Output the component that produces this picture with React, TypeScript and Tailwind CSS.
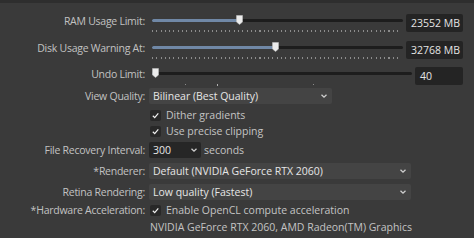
import React from "react";

const font = { fontFamily: '"Open Sans", "Noto Sans", sans-serif' };

function Chevron() {
  return (
    <svg width="8" height="6" viewBox="0 0 8 6" className="shrink-0">
      <path d="M1.5 1.8 L4 4.2 L6.5 1.8" fill="none" stroke="#cfcfcf" strokeWidth="1.3" />
    </svg>
  );
}

function Check() {
  return (
    <span className="flex h-[11px] w-[11px] items-center justify-center rounded-[2px] bg-[#282828]">
      <svg width="9" height="9" viewBox="0 0 9 9">
        <path d="M1.8 4.8 L3.7 6.6 L7.3 2.4" fill="none" stroke="#f0f0f0" strokeWidth="1.2" />
      </svg>
    </span>
  );
}

function Thumb() {
  return (
    <svg width="7" height="10" viewBox="0 0 7 10">
      <path d="M0.5 0.5 H6.5 V7 L3.5 9.5 L0.5 7 Z" fill="#ececec" stroke="#bdbdbd" strokeWidth="0.6" />
    </svg>
  );
}

function Label({ children }: { children: React.ReactNode }) {
  return (
    <div className="w-[146px] shrink-0 pr-[1px] text-right tracking-[-0.25px] text-[#c2c2c2]">{children}</div>
  );
}

function SliderRow({
  label,
  value,
  pos,
  width,
  boxWidth,
  dense,
  height,
}: {
  label: string;
  value: string;
  pos: number;
  width: number;
  boxWidth: number;
  dense: boolean;
  height: string;
}) {
  return (
    <div className={`flex ${height}`}>
      <div className="w-[146px] shrink-0 pt-[2px] pr-[1px] text-right tracking-[-0.25px] text-[#c2c2c2]">
        {label}
      </div>
      <div className="ml-[6px] shrink-0" style={{ width }}>
        <div className="relative mt-[8px] h-[3px] rounded-full bg-[#1d1d1d]">
          <div className="h-[3px] rounded-full bg-[#7088a6]" style={{ width: pos }} />
          <div className="absolute top-[-4px]" style={{ left: pos - 3 }}>
            <Thumb />
          </div>
        </div>
        {dense ? (
          <div className="mt-[8px] h-[2px] w-[249px] bg-[repeating-linear-gradient(90deg,#8c8c8c_0_1px,transparent_1px_4.3px)]" />
        ) : (
          <div className="relative mt-[9px] h-[2px]">
            <span className="absolute left-[33px] h-[1px] w-[1px] bg-[#8a8a8a]" />
            <span className="absolute left-[65px] h-[2px] w-[1px] bg-[#b0b0b0]" />
            <span className="absolute left-[161px] h-[1px] w-[1px] bg-[#8a8a8a]" />
          </div>
        )}
      </div>
      <div
        className="ml-auto mr-[11px] mt-[3px] flex h-[18px] items-center rounded-[2px] bg-[#242424] pl-[5px] text-[#e4e4e4]"
        style={{ width: boxWidth }}
      >
        {value}
      </div>
    </div>
  );
}

export default function App() {
  return (
    <div
      className="h-[238px] w-[474px] overflow-hidden bg-[#3a3a3a] text-[10.5px] leading-[16px]"
      style={font}
    >
      <div className="h-[3px] bg-[#2e2e2e]" />
      <div className="flex flex-col pt-[8px]">
        <SliderRow label="RAM Usage Limit:" value="23552 MB" pos={87} width={251} boxWidth={57} dense height="h-[27px]" />
        <SliderRow label="Disk Usage Warning At:" value="32768 MB" pos={123} width={251} boxWidth={57} dense height="h-[26px]" />
        <SliderRow label="Undo Limit:" value="40" pos={3} width={260} boxWidth={48} dense={false} height="h-[24px]" />

        <div className="flex h-[16px] items-center">
          <Label>View Quality:</Label>
          <div className="ml-[3px] flex h-[16px] w-[183px] items-center justify-between rounded-[2px] bg-[#444444] pl-[4px] pr-[4px] text-[#e6e6e6]">
            <span>Bilinear (Best Quality)</span>
            <Chevron />
          </div>
        </div>

        <div className="mt-[3px] flex h-[16px] items-center pl-[150px] text-[#c4c4c4]">
          <Check />
          <span className="ml-[5px]">Dither gradients</span>
        </div>
        <div className="flex h-[16px] items-center pl-[150px] text-[#c4c4c4]">
          <Check />
          <span className="ml-[5px]">Use precise clipping</span>
        </div>

        <div className="mt-[3px] flex h-[16px] items-center">
          <Label>File Recovery Interval:</Label>
          <div className="ml-[3px] flex h-[16px] w-[52px] items-center justify-between rounded-[2px] bg-[#262626] pl-[4px] pr-[3px] text-[#e6e6e6]">
            <span>300</span>
            <Chevron />
          </div>
          <span className="ml-[3px] text-[#c4c4c4]">seconds</span>
        </div>

        <div className="mt-[5px] flex h-[16px] items-center">
          <Label>*Renderer:</Label>
          <div className="ml-[3px] flex h-[16px] w-[262px] items-center justify-between rounded-[2px] bg-[#444444] pl-[4px] pr-[4px] text-[#e6e6e6]">
            <span>Default (NVIDIA GeForce RTX 2060)</span>
            <Chevron />
          </div>
        </div>

        <div className="mt-[5px] flex h-[16px] items-center">
          <Label>Retina Rendering:</Label>
          <div className="ml-[3px] flex h-[16px] w-[262px] items-center justify-between rounded-[2px] bg-[#444444] pl-[4px] pr-[4px] text-[#e6e6e6]">
            <span>Low quality (Fastest)</span>
            <Chevron />
          </div>
        </div>

        <div className="mt-[2px] flex h-[16px] items-center">
          <Label>*Hardware Acceleration:</Label>
          <span className="ml-[4px]">
            <Check />
          </span>
          <span className="ml-[5px] text-[#c4c4c4]">Enable OpenCL compute acceleration</span>
        </div>

        <div className="flex h-[17px] items-center pl-[150px] text-[#c4c4c4]">
          NVIDIA GeForce RTX 2060, AMD Radeon(TM) Graphics
        </div>
      </div>
    </div>
  );
}
